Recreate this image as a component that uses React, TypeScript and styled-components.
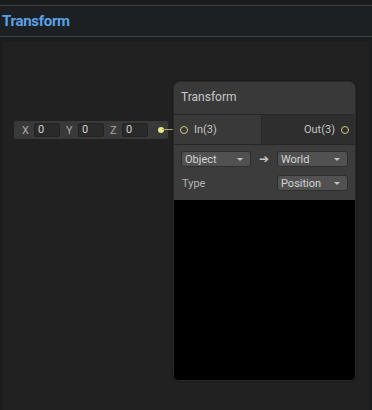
import styled, { createGlobalStyle } from "styled-components";

const GlobalStyle = createGlobalStyle`
  html, body {
    margin: 0;
    padding: 0;
    background: #1b1c1d;
  }
  body {
    font-family: Roboto, "Liberation Sans", sans-serif;
  }
`

// style
const Page = styled.div`
  width: 372px;
  height: 410px;
  display: flex;
  flex-direction: column;
  background: #1b1c1d;
  overflow: hidden;
`
const Header = styled.div`
  margin-top: 5px;
  height: 30px;
  display: flex;
  align-items: center;
  padding: 0 2px;
  background: #1c2022;
  border-top: 1px solid #3e4446;
  border-bottom: 1px solid #3e4446;
  font-size: 15px;
  font-weight: 700;
  color: #5aa2e6;
  letter-spacing: -0.3px;
`
const Canvas = styled.div`
  position: relative;
  flex: 1;
  margin: 5px 3px 0 3px;
  background: #212121;
`
const InlineNode = styled.div`
  position: absolute;
  left: 11px;
  top: 79px;
  width: 154px;
  height: 18px;
  background: #393939;
  border-radius: 2px;
  display: flex;
  align-items: center;
  padding-left: 5px;
  box-sizing: border-box;
  gap: 3px;
`
const AxisLabel = styled.span`
  font-size: 11px;
  color: #a8a8a8;
  width: 9px;
  margin-left: 3px;
`
const Field = styled.div`
  width: 26px;
  height: 14px;
  box-sizing: border-box;
  background: #2a2a2a;
  border: 1px solid #232323;
  border-radius: 2px;
  font-size: 11px;
  color: #d2d2d2;
  line-height: 12px;
  padding-left: 3px;
`
const Dot = styled.div`
  position: absolute;
  right: 4px;
  top: 6px;
  width: 6px;
  height: 6px;
  border-radius: 50%;
  background: #e6e68a;
`
const Edge = styled.div`
  position: absolute;
  left: 159px;
  top: 87px;
  width: 19px;
  height: 1px;
  background: #b0b070;
`
const Node = styled.div`
  position: absolute;
  left: 170px;
  top: 39px;
  width: 183px;
  height: 300px;
  border-radius: 6px;
  background: #000;
  border: 1px solid #2a2a2a;
  box-sizing: border-box;
  overflow: hidden;
  display: flex;
  flex-direction: column;
  box-shadow: 0 0 2px #111;
`
const NodeTitle = styled.div`
  height: 33px;
  background: #393939;
  display: flex;
  align-items: center;
  padding: 0 0 3px 7px;
  box-sizing: border-box;
  font-size: 12px;
  color: #c8c8c8;
  border-bottom: 1px solid #262626;
`
const Ports = styled.div`
  height: 29px;
  display: grid;
  grid-template-columns: 87px 1fr;
  border-bottom: 1px solid #262626;
`
const Port = styled.div<{ $out?: boolean }>`
  display: flex;
  align-items: center;
  justify-content: ${p => (p.$out ? "flex-end" : "flex-start")};
  gap: 6px;
  padding: 0 6px 0 6px;
  background: ${p => (p.$out ? "#2e2e2e" : "#393939")};
  border-left: ${p => (p.$out ? "1px solid #262626" : "none")};
  font-size: 11px;
  color: #c4c4c4;
`
const PortCircle = styled.span`
  width: 8px;
  height: 8px;
  border-radius: 50%;
  border: 1.4px solid #c9c979;
  box-sizing: border-box;
  flex: none;
`
const Controls = styled.div`
  height: 55px;
  background: #3c3c3c;
  padding: 6px 7px 0;
  display: flex;
  flex-direction: column;
  gap: 8px;
  box-sizing: border-box;
`
const Row = styled.div`
  display: flex;
  align-items: center;
  justify-content: space-between;
`
const Dropdown = styled.div<{ $w: number }>`
  width: ${p => p.$w}px;
  height: 16px;
  box-sizing: border-box;
  background: #515151;
  border: 1px solid #2e2e2e;
  border-radius: 3px;
  display: flex;
  align-items: center;
  justify-content: space-between;
  padding: 0 7px 0 3px;
  font-size: 11px;
  color: #d4d4d4;
  &::after {
    content: '';
    border-left: 3.5px solid transparent;
    border-right: 3.5px solid transparent;
    border-top: 3.5px solid #c4c4c4;
  }
`
const Arrow = styled.span`
  font-size: 12px;
  color: #c4c4c4;
`
const Label = styled.span`
  font-size: 11px;
  color: #b4b4b4;
  padding-left: 1px;
`
const Preview = styled.div`
  flex: 1;
  background: #000;
`

const axes = ['X', 'Y', 'Z']

function App() {
  return (
    <Page>
      <GlobalStyle />
      <Header>Transform</Header>
      <Canvas>
        <InlineNode>
          {axes.map(a =>
            <>
              <AxisLabel key={a}>{a}</AxisLabel>
              <Field>0</Field>
            </>
          )}
          <Dot />
        </InlineNode>
        <Edge />
        <Node>
          <NodeTitle>Transform</NodeTitle>
          <Ports>
            <Port><PortCircle />In(3)</Port>
            <Port $out>Out(3)<PortCircle /></Port>
          </Ports>
          <Controls>
            <Row>
              <Dropdown $w={70}>Object</Dropdown>
              <Arrow>➔</Arrow>
              <Dropdown $w={71}>World</Dropdown>
            </Row>
            <Row>
              <Label>Type</Label>
              <Dropdown $w={71}>Position</Dropdown>
            </Row>
          </Controls>
          <Preview />
        </Node>
      </Canvas>
    </Page>
  )
}

export default App
